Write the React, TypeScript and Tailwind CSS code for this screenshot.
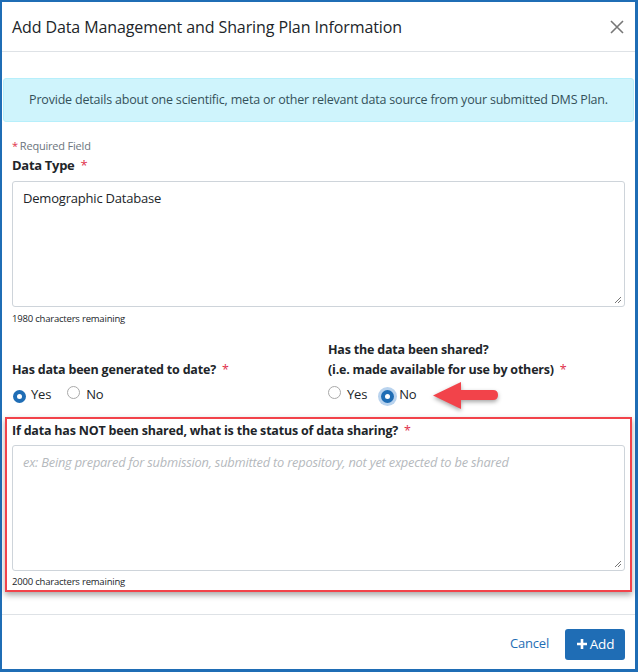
import React from "react";

const font = { fontFamily: '"Open Sans", "Noto Sans", sans-serif' };

function Radio({ checked, focus }: { checked?: boolean; focus?: boolean }) {
  if (checked) {
    return (
      <span
        className={`inline-flex items-center justify-center w-[13px] h-[13px] rounded-full bg-[#1f6db5] ${
          focus ? "ring-[3px] ring-[#b9d3ee]" : ""
        }`}
      >
        <span className="w-[5px] h-[5px] rounded-full bg-white" />
      </span>
    );
  }
  return <span className="inline-block w-[13px] h-[13px] rounded-full border border-[#a9a9a9] bg-white" />;
}

function Star() {
  return <span className="text-[#e0304a] ml-[6px] font-normal">*</span>;
}

export default function App() {
  return (
    <div
      className="w-[638px] h-[672px] bg-white border-t-2 border-l-2 border-r-[3px] border-b-[3px] border-[#1f6db5] flex flex-col relative text-[#212529]"
      style={font}
    >
      <div className="h-[50px] flex items-center justify-between pl-[10px] pr-[8px] border-b border-[#dee2e6] shrink-0">
        <div className="text-[16px] leading-none tracking-[-0.1px]">Add Data Management and Sharing Plan Information</div>
        <svg width="16" height="16" viewBox="0 0 16 16" className="mr-[2px]">
          <path d="M2 2 L14 14 M14 2 L2 14" stroke="#777" strokeWidth="1.6" />
        </svg>
      </div>

      <div className="flex-1 flex flex-col">
        <div className="mt-[26px] mx-[1px] h-[44px] bg-[#cff4fc] border border-[#b6effb] rounded-[3px] flex items-center justify-center text-[12.5px] text-[#34515a] tracking-[-0.2px]">
          Provide details about one scientific, meta or other relevant data source from your submitted DMS Plan.
        </div>

        <div className="px-[10px]">
          <div className="mt-[17px] text-[11px] leading-[14px] text-[#6c757d] tracking-[-0.2px]">
            <span className="text-[#e0304a] mr-[2px]">*</span>Required Field
          </div>
          <div className="mt-[3px] text-[13px] leading-[18px] font-bold tracking-[-0.3px]">
            Data Type
            <Star />
          </div>
          <div className="mt-[7px] h-[126px] border border-[#ced4da] rounded-[3px] relative">
            <div className="pl-[10px] pt-[7px] text-[13px] tracking-[-0.2px]">Demographic Database</div>
            <svg width="8" height="8" viewBox="0 0 8 8" className="absolute right-[2px] bottom-[2px]">
              <path d="M7 1 L1 7 M7 4 L4 7" stroke="#777" strokeWidth="1" />
            </svg>
          </div>
          <div className="mt-[6px] text-[9.5px] leading-[12px] tracking-[-0.2px]">1980 characters remaining</div>

          <div className="mt-[15px] flex">
            <div className="w-[316px] flex flex-col justify-end">
              <div className="text-[12.5px] leading-[20px] font-bold tracking-[-0.2px]">
                Has data been generated to date?
                <Star />
              </div>
              <div className="mt-[5px] flex items-center h-[20px] text-[13px] tracking-[-0.2px]">
                <span className="ml-[1px]"><Radio checked /></span>
                <span className="ml-[5px]">Yes</span>
                <span className="ml-[16px]"><Radio /></span>
                <span className="ml-[6px]">No</span>
              </div>
            </div>
            <div className="flex flex-col">
              <div className="text-[12.5px] leading-[20px] font-bold tracking-[-0.2px]">Has the data been shared?</div>
              <div className="text-[12.5px] leading-[20px] font-bold tracking-[-0.2px]">
                (i.e. made available for use by others)
                <Star />
              </div>
              <div className="mt-[5px] flex items-center h-[20px] text-[13px] tracking-[-0.2px]">
                <span className="ml-[0px]"><Radio /></span>
                <span className="ml-[6px]">Yes</span>
                <span className="ml-[14px]"><Radio checked focus /></span>
                <span className="ml-[5px]">No</span>
              </div>
            </div>
          </div>
        </div>

        <div className="mt-[12px] mx-[3px] border-2 border-[#f2434a] shadow-[0_3px_6px_rgba(0,0,0,0.35)] px-[5px] pt-[2px] pb-[2px]">
          <div className="text-[12.5px] leading-[20px] font-bold tracking-[-0.2px]">
            If data has NOT been shared, what is the status of data sharing?
            <Star />
          </div>
          <div className="mt-[4px] h-[126px] border border-[#ced4da] rounded-[3px] relative">
            <div className="pl-[10px] pt-[7px] text-[12.8px] italic text-[#b5b9bd] tracking-[-0.2px]">
              ex: Being prepared for submission, submitted to repository, not yet expected to be shared
            </div>
            <svg width="8" height="8" viewBox="0 0 8 8" className="absolute right-[2px] bottom-[2px]">
              <path d="M7 1 L1 7 M7 4 L4 7" stroke="#777" strokeWidth="1" />
            </svg>
          </div>
          <div className="mt-[5px] text-[9.5px] leading-[12px] tracking-[-0.2px]">2000 characters remaining</div>
        </div>

        <div className="mt-auto border-t border-[#dee2e6] h-[55px] flex items-center justify-end pr-[10px] pt-[4px]">
          <span className="text-[13px] text-[#1f6db5] mr-[16px] tracking-[-0.2px]">Cancel</span>
          <div className="h-[31px] w-[60px] bg-[#1f6db5] rounded-[3px] flex items-center justify-center text-white text-[13.5px] tracking-[-0.2px]">
            <svg width="12" height="12" viewBox="0 0 12 12" className="mr-[2px]">
              <path d="M6 1 V11 M1 6 H11" stroke="white" strokeWidth="2.6" />
            </svg>
            Add
          </div>
        </div>
      </div>

      <svg
        width="74"
        height="34"
        viewBox="0 0 74 34"
        className="absolute left-[426px] top-[377px]"
        style={{ filter: "drop-shadow(0 2px 2px rgba(0,0,0,0.35))" }}
      >
        <path d="M5 16.5 L33 3 L33 11 L65 11 Q70 11 70 16 Q70 21 65 21 L33 21 L33 30 Z" fill="#f2434a" />
      </svg>
    </div>
  );
}
